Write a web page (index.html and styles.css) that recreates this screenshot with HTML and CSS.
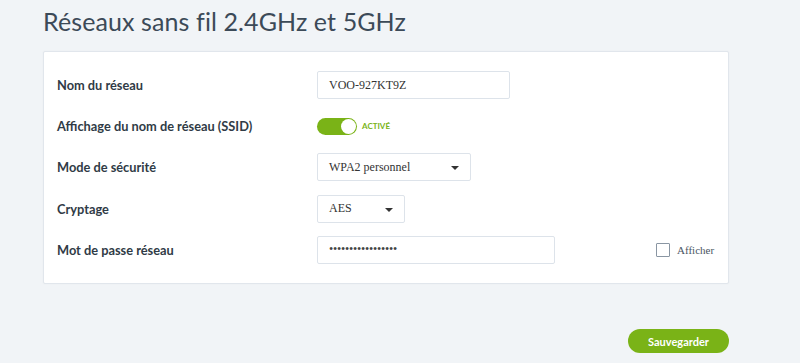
FILE: index.html
```html
<!DOCTYPE html>
<html lang="fr">
<head>
<meta charset="utf-8">
<link rel="stylesheet" href="styles.css">
</head>
<body>
<div class="page">
  <h1 class="title">Réseaux sans fil 2.4GHz et 5GHz</h1>
  <div class="card">
    <div class="row">
      <div class="label">Nom du réseau</div>
      <div class="field"><div class="input w-name">VOO-927KT9Z</div></div>
    </div>
    <div class="row">
      <div class="label">Affichage du nom de réseau (SSID)</div>
      <div class="field">
        <div class="toggle"><span class="knob"></span></div>
        <span class="toggle-text">ACTIVÉ</span>
      </div>
    </div>
    <div class="row">
      <div class="label">Mode de sécurité</div>
      <div class="field"><div class="input select w-mode">WPA2 personnel<span class="caret"></span></div></div>
    </div>
    <div class="row">
      <div class="label">Cryptage</div>
      <div class="field"><div class="input select w-aes">AES<span class="caret"></span></div></div>
    </div>
    <div class="row">
      <div class="label">Mot de passe réseau</div>
      <div class="field"><div class="input w-pass dots">•••••••••••••••••</div></div>
      <div class="show"><span class="checkbox"></span><span class="show-text">Afficher</span></div>
    </div>
  </div>
  <div class="actions"><button class="btn">Sauvegarder</button></div>
</div>
</body>
</html>
```

FILE: styles.css
```css
html, body { margin: 0; padding: 0; }
body {
  background: #f1f4f7;
  font-family: Lato, "Open Sans", sans-serif;
  width: 800px;
  height: 363px;
  overflow: hidden;
}
.page {
  padding: 0 71px 0 43px;
}
.title {
  margin: 0;
  padding-top: 6px;
  height: 45px;
  font-family: Lato, sans-serif;
  font-weight: 400;
  font-size: 25px;
  color: #3c4a58;
  letter-spacing: 0.1px;
}
.card {
  background: #fff;
  border: 1px solid #e1e6ec;
  border-radius: 2px;
  box-shadow: 0 0 2px rgba(0,0,0,0.04);
  height: 233px;
  box-sizing: border-box;
  padding: 19px 0 0 13px;
}
.row {
  display: flex;
  align-items: center;
  height: 28px;
  margin-bottom: 13.2px;
}
.label {
  width: 260px;
  font-size: 12.8px;
  font-weight: 700;
  color: #303b46;
}
.field {
  display: flex;
  align-items: center;
  width: 339px;
}
.input {
  box-sizing: border-box;
  height: 28px;
  border: 1px solid #dde3ea;
  border-radius: 2px;
  background: #fff;
  display: flex;
  align-items: center;
  padding-left: 11px;
  font-family: "Liberation Serif", serif;
  font-size: 12px;
  color: #333;
  position: relative;
}
.w-name { width: 193px; }
.w-mode { width: 154px; }
.w-aes { width: 88px; }
.w-pass { width: 238px; }
.dots { font-size: 12px; letter-spacing: -0.2px; color: #444; }
.caret {
  position: absolute;
  right: 11px;
  top: 12px;
  width: 0; height: 0;
  border-left: 4px solid transparent;
  border-right: 4px solid transparent;
  border-top: 4px solid #333;
}
.toggle {
  width: 40px;
  height: 17px;
  border-radius: 9px;
  background: #7ab317;
  position: relative;
}
.knob {
  position: absolute;
  right: 1px;
  top: 1px;
  width: 15px;
  height: 15px;
  border-radius: 50%;
  background: #fff;
}
.toggle-text {
  margin-left: 5px;
  font-size: 8px;
  font-weight: 700;
  color: #7ab317;
}
.show {
  display: flex;
  align-items: center;
}
.checkbox {
  width: 12px;
  height: 12px;
  border: 1px solid #8a96a3;
  border-radius: 1px;
  background: #fff;
}
.show-text {
  margin-left: 7px;
  font-family: "Liberation Serif", serif;
  font-size: 11px;
  color: #4a5663;
}
.actions {
  display: flex;
  justify-content: flex-end;
  padding-top: 45px;
}
.btn {
  width: 101px;
  height: 24px;
  border: none;
  border-radius: 12px;
  background: #7ab317;
  color: #fff;
  font-family: Lato, sans-serif;
  font-weight: 700;
  font-size: 11px;
  padding: 0;
}
```
